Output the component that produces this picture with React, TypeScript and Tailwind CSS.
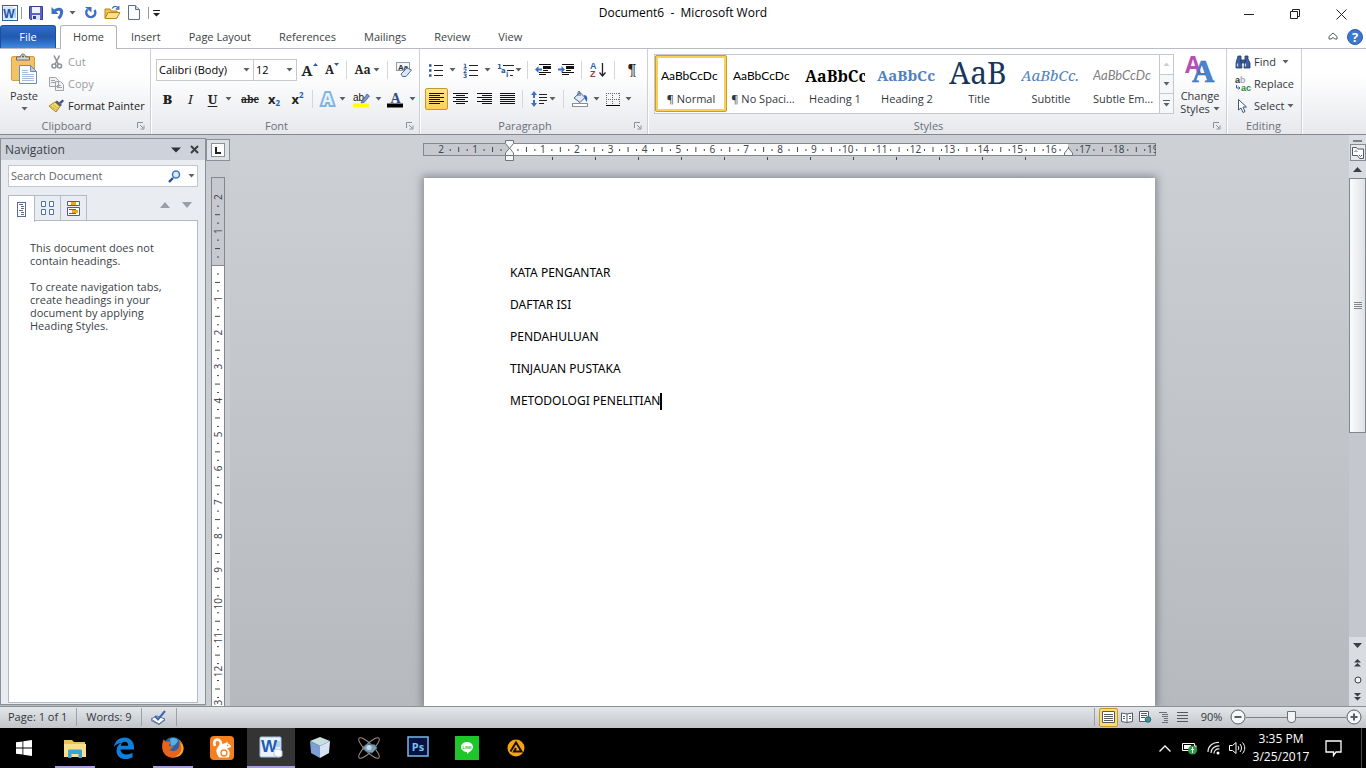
import type { ReactNode } from 'react';
import clsx from 'clsx';

const CM = 33.88;

const tabs = ['Insert', 'Page Layout', 'References', 'Mailings', 'Review', 'View'];

const styles = [
  { name: '¶ Normal', sample: 'AaBbCcDc', look: 'text-[12px] text-black font-[Lato,sans-serif]' },
  { name: '¶ No Spaci...', sample: 'AaBbCcDc', look: 'text-[12px] text-black font-[Lato,sans-serif]' },
  { name: 'Heading 1', sample: 'AaBbCc', look: 'text-[16px] font-bold text-black font-[Noto_Serif,DejaVu_Serif_Condensed,DejaVu_Serif,serif]' },
  { name: 'Heading 2', sample: 'AaBbCc', look: 'text-[15px] font-bold text-[#4f81bd] font-[Noto_Serif,DejaVu_Serif_Condensed,DejaVu_Serif,serif]' },
  { name: 'Title', sample: 'AaB', look: 'text-[30px] text-[#17365d] font-[Noto_Serif,DejaVu_Serif_Condensed,DejaVu_Serif,serif]' },
  { name: 'Subtitle', sample: 'AaBbCc.', look: 'text-[15px] italic text-[#4f81bd] font-[Noto_Serif,DejaVu_Serif_Condensed,DejaVu_Serif,serif]' },
  { name: 'Subtle Em...', sample: 'AaBbCcDc', look: 'text-[13px] italic text-[#808080] font-[Lato,sans-serif]' },
];

const paragraphs = ['KATA PENGANTAR', 'DAFTAR ISI', 'PENDAHULUAN', 'TINJAUAN PUSTAKA', 'METODOLOGI PENELITIAN'];

/* ---------- small pieces ---------- */

function Arrow({ className }: { className?: string }) {
  return (
    <svg width="7" height="4" viewBox="0 0 7 4" className={clsx('shrink-0', className)} aria-hidden="true">
      <path d="M0.5 0h6L3.5 3.5z" fill="#5b6067" />
    </svg>
  );
}

function Sep() {
  return <span className="mx-[3px] h-[18px] w-px shrink-0 bg-[#d3d6da]" />;
}

function Launcher({ label }: { label: string }) {
  return (
    <button aria-label={label} className="flex h-4 w-4 shrink-0 items-center justify-center">
      <svg width="8" height="8" viewBox="0 0 8 8" fill="none" stroke="#8a9099">
        <path d="M0.5 6V0.5H6M3 3l3 3M7 3.500V7H3.500" />
      </svg>
    </button>
  );
}

type GroupProps = { title: string; launcher?: boolean; className?: string; children: ReactNode };

function Group({ title, launcher = true, className, children }: GroupProps) {
  return (
    <section className={clsx('flex shrink-0 flex-col border-r border-[#ccd0d5] shadow-[1px_0_0_#fff]', className)}>
      <div className="flex flex-1">{children}</div>
      <div className="flex h-4 items-center pr-[1px]">
        <span className="flex-1 text-center text-[#6a7079]">{title}</span>
        {launcher && <Launcher label={`${title} options`} />}
      </div>
    </section>
  );
}

function Tool({ label, className, children }: { label: string; className?: string; children: ReactNode }) {
  return (
    <button aria-label={label} className={clsx('flex h-[22px] shrink-0 items-center justify-center', className)}>
      {children}
    </button>
  );
}

function Combo({ label, value, className }: { label: string; value: string; className?: string }) {
  return (
    <div className={clsx('flex h-[22px] items-center border border-[#c5c9ce] bg-white pr-[3px]', className)}>
      <select aria-label={label} className="min-w-0 flex-1 appearance-none bg-transparent pl-[2px] text-black outline-none">
        <option>{value}</option>
      </select>
      <Arrow />
    </div>
  );
}

function Lines({ widths, align = 'left' }: { widths: number[]; align?: 'left' | 'center' | 'right' }) {
  return (
    <svg width="15" height="12" viewBox="0 0 15 12" shapeRendering="crispEdges">
      {widths.map((w, i) => (
        <rect
          key={i}
          x={align === 'left' ? 0 : align === 'right' ? 15 - w : Math.floor((15 - w) / 2)}
          y={i * 2}
          width={w}
          height="1"
          fill="#111"
        />
      ))}
    </svg>
  );
}

/* ---------- title bar ---------- */

function WordLogo() {
  return (
    <svg width="16" height="16" viewBox="0 0 16 16">
      <rect x="0.5" y="0.5" width="15" height="15" fill="#fff" stroke="#2a62ae" />
      <rect x="1.5" y="1.5" width="10" height="13" fill="#d4e4f7" />
      <path d="M12 4h2M12 6h2M12 8h2M12 10h2M12 12h2" stroke="#7fa3d4" />
      <text x="7" y="12.500" textAnchor="middle" fontSize="12" fontWeight="bold" fontFamily="Liberation Sans, sans-serif" fill="#1d56a6">W</text>
    </svg>
  );
}

function TitleBar() {
  return (
    <header className="flex h-[25px] shrink-0 items-center bg-white">
      <div className="flex flex-1 items-center pl-[2px]">
        <WordLogo />
        <span className="ml-[3px] h-3 w-px bg-[#999]" />
        <button aria-label="Save" className="ml-[7px]">
          <svg width="14" height="14" viewBox="0 0 14 14">
            <path d="M0.500 0.500h13v13h-12l-1-1z" fill="#5a63c0" stroke="#363c90" />
            <rect x="3" y="1" width="8" height="6" fill="#eef2fb" />
            <rect x="3" y="9" width="8" height="5" fill="#dfe3ee" />
            <rect x="4" y="10" width="3" height="3" fill="#363c90" />
          </svg>
        </button>
        <button aria-label="Undo" className="ml-[8px]">
          <svg width="14" height="14" viewBox="0 0 14 14" fill="none" stroke="#3f6fc4" strokeWidth="3">
            <path d="M3 5.500C7 1.500 11.500 3 10.500 7.500c-.4 2-1.500 3.500-3 5" />
            <path d="M0.500 1v7h7z" fill="#3f6fc4" stroke="none" />
          </svg>
        </button>
        <Arrow className="ml-[4px]" />
        <button aria-label="Redo" className="ml-[8px]">
          <svg width="14" height="14" viewBox="0 0 14 14" fill="none" stroke="#3f6fc4" strokeWidth="2.500">
            <path d="M3.500 3.500a4.500 4.500 0 1 0 7 0.500" />
            <path d="M1 1h6.500v5.500z" fill="#3f6fc4" stroke="none" />
          </svg>
        </button>
        <button aria-label="Open" className="ml-[6px]">
          <svg width="17" height="15" viewBox="0 0 17 15">
            <path d="M1 13V4h5l1 2h6v7z" fill="#f2c14e" stroke="#b98318" />
            <path d="M1 13.500l3-6h12l-3.500 6z" fill="#ffe08a" stroke="#b98318" />
            <path d="M8 3.500c2-3 5-2.500 6-0.500M14.800 1v3h-3" fill="none" stroke="#3f6fb4" strokeWidth="1.300" />
          </svg>
        </button>
        <button aria-label="New" className="ml-[7px]">
          <svg width="12" height="15" viewBox="0 0 12 15">
            <path d="M0.500 0.500h7l4 4v10h-11z" fill="#fdfeff" stroke="#5d6f8d" />
            <path d="M7.500 0.500v4h4" fill="#c9d6ea" stroke="#5d6f8d" />
          </svg>
        </button>
        <span className="ml-[8px] h-3 w-px bg-[#999]" />
        <button aria-label="Customize Quick Access Toolbar" className="ml-[4px]">
          <svg width="7" height="8" viewBox="0 0 7 8" fill="#222">
            <path d="M0 1h7v1H0zM0 4h7L3.500 7.500z" />
          </svg>
        </button>
      </div>
      <h1 className="text-[12px] text-black">Document6&nbsp; -&nbsp; Microsoft Word</h1>
      <div className="flex flex-1 justify-end pr-[2px] pt-[3px]">
        <button aria-label="Minimize" className="flex h-5 w-[46px] items-center justify-center">
          <svg width="10" height="10" stroke="#222"><path d="M0 5.500h10" /></svg>
        </button>
        <button aria-label="Restore" className="flex h-5 w-[46px] items-center justify-center">
          <svg width="10" height="10" fill="none" stroke="#222"><path d="M0.500 2.500h7v7h-7zM2.500 2.500v-2h7v7h-2" /></svg>
        </button>
        <button aria-label="Close" className="flex h-5 w-[46px] items-center justify-center">
          <svg width="11" height="11" stroke="#222"><path d="M0.500 0.500l10 10M10.500 0.500l-10 10" /></svg>
        </button>
      </div>
    </header>
  );
}

function TabRow() {
  return (
    <nav className="flex h-6 shrink-0 border-b border-[#b9bdc3] bg-white text-[#3b3f45]">
      <button className="w-14 rounded-t-[3px] border border-b-0 border-[#1c4f9f] bg-linear-to-b from-[#2f6cc8] via-[#2259b0] to-[#3f8ae0] text-white">
        File
      </button>
      <button className="relative -mb-px ml-1 w-[57px] rounded-t-[3px] border border-b-0 border-[#b0b4ba] bg-white pb-px">
        Home
      </button>
      {tabs.map((tab) => (
        <button key={tab} className="px-[14px]">{tab}</button>
      ))}
      <div className="flex flex-1 items-center justify-end gap-[9px] pr-[3px]">
        <button aria-label="Minimize the Ribbon">
          <svg width="10" height="9" viewBox="0 0 10 9" fill="none" stroke="#555b63">
            <path d="M1 4.500L5 1l4 3.500v2.500H7L5 5.500 3 7H1z" />
          </svg>
        </button>
        <button aria-label="Help">
          <svg width="16" height="16" viewBox="0 0 16 16">
            <circle cx="8" cy="8" r="7.500" fill="#3b78d0" stroke="#2a5ca8" />
            <text x="8" y="12.500" textAnchor="middle" fontSize="13" fontWeight="bold" fontFamily="Open Sans, sans-serif" fill="#fff">?</text>
          </svg>
        </button>
      </div>
    </nav>
  );
}

/* ---------- ribbon ---------- */

function Clipboard() {
  return (
    <Group title="Clipboard" className="w-[151px]">
      <button className="flex w-12 flex-col items-center pt-[4px]">
        <svg width="28" height="31" viewBox="0 0 28 31">
          <rect x="1.500" y="3.500" width="23" height="24" rx="1.500" fill="#f3c266" stroke="#d49d40" />
          <path d="M6.500 7V4h4c0-4 5-4 5 0h4v3z" fill="#d3d6da" stroke="#666b73" />
          <circle cx="13" cy="3.500" r="1" fill="#555" />
          <path d="M9.500 12.500h11l6 6v12h-17z" fill="#fafcff" stroke="#7188b5" />
          <path d="M20.500 12.500v6h6z" fill="#bccbe6" stroke="#7188b5" />
          <path d="M12 17.500h6M12 19.500h6M12 21.500h12M12 23.500h12M12 25.500h12M12 27.500h12" stroke="#a9bbdc" />
        </svg>
        <span className="mt-1">Paste</span>
        <Arrow className="mt-[3px]" />
      </button>
      <div className="flex flex-col pt-[2px]">
        <button className="flex h-[22px] items-center gap-[3px] text-[#9a9da1]">
          <svg width="17" height="16" viewBox="0 0 17 16" fill="none" stroke="#8f9296" strokeWidth="1.600">
            <path d="M6 1.500l4.500 9M11.500 1.500l-4.500 9" />
            <circle cx="6" cy="12" r="2" />
            <circle cx="11.500" cy="12" r="2" />
          </svg>
          Cut
        </button>
        <button className="flex h-[22px] items-center gap-[3px] text-[#9a9da1]">
          <svg width="17" height="14" viewBox="0 0 17 14" fill="#f1f2f3" stroke="#9fa2a6">
            <path d="M1.500 0.500h6l3 3v6h-9zM7.500 4.500h5l3 3v6h-8z" />
            <path d="M3 3.500h4M3 5.500h4M9 8.500h4M9 10.500h5" />
          </svg>
          Copy
        </button>
        <button className="flex h-[22px] items-center gap-[3px] text-[#222]">
          <svg width="17" height="14" viewBox="0 0 17 14">
            <path d="M1 7l6-4 5 4.500L8 13z" fill="#f3dc6a" stroke="#a38a25" />
            <path d="M3 7.500l6 3.500M5 6l5 3" stroke="#c7ad45" />
            <path d="M7 3l2-1.500 5 4.500-2 1.500z" fill="#555a66" />
            <path d="M11 3.500L14.500 0.500l1.500 1.500-3 3z" fill="#3e4d94" />
          </svg>
          Format Painter
        </button>
      </div>
    </Group>
  );
}

const glyph = 'font-[Noto_Serif,DejaVu_Serif_Condensed,DejaVu_Serif,serif] leading-none text-[#222]';

function FontGroup() {
  return (
    <Group title="Font" className="w-[269px]">
      <div className="flex flex-col gap-[7px] pl-[5px] pt-[10px]">
        <div className="flex items-center">
          <Combo label="Font" value="Calibri (Body)" className="w-[98px]" />
          <Combo label="Font Size" value="12" className="w-[43px] border-l-0" />
          <Tool label="Grow Font" className="ml-[1px] w-[23px]">
            <span className={clsx(glyph, 'text-[15px] font-bold')}>A</span>
            <svg width="5" height="3" className="mt-1 self-start" fill="#3a5a98"><path d="M0 3h5L2.500 0z" /></svg>
          </Tool>
          <Tool label="Shrink Font" className="w-[22px]">
            <span className={clsx(glyph, 'text-[12px] font-bold')}>A</span>
            <svg width="5" height="3" className="mt-1 self-start" fill="#3a5a98"><path d="M0 0h5L2.500 3z" /></svg>
          </Tool>
          <Sep />
          <Tool label="Change Case" className="w-[34px] gap-[2px]">
            <span className={clsx(glyph, 'text-[12px] font-bold')}>Aa</span>
            <Arrow />
          </Tool>
          <Sep />
          <Tool label="Clear Formatting" className="w-[26px]">
            <svg width="18" height="18" viewBox="0 0 18 18">
              <rect x="1.500" y="1.500" width="13" height="8" fill="#f4f7fc" stroke="#8b9bb8" />
              <text x="8" y="9" textAnchor="middle" fontSize="8" fontWeight="bold" fontFamily="Liberation Sans, sans-serif" fill="#333">Aa</text>
              <path d="M6 13l6-6 4.500 2L11 15.500 7.500 15.500z" fill="#dbe7f7" stroke="#4d6fa8" />
            </svg>
          </Tool>
        </div>
        <div className="flex items-center">
          <Tool label="Bold" className="w-[23px]"><b className={clsx(glyph, 'text-[13px] font-black')}>B</b></Tool>
          <Tool label="Italic" className="w-[23px]"><i className={clsx(glyph, 'text-[13px]')}>I</i></Tool>
          <Tool label="Underline" className="w-[36px] gap-[8px]">
            <u className={clsx(glyph, 'text-[13px] font-bold underline-offset-2')}>U</u>
            <Arrow />
          </Tool>
          <Tool label="Strikethrough" className="w-[24px]"><s className={clsx(glyph, 'text-[10px] font-bold')}>abc</s></Tool>
          <Tool label="Subscript" className="w-[24px]">
            <b className="text-[13px] leading-none text-[#222]">x</b>
            <span className="mt-2 text-[8px] leading-none font-bold text-[#2a5db0]">2</span>
          </Tool>
          <Tool label="Superscript" className="w-[23px]">
            <b className="text-[13px] leading-none text-[#222]">x</b>
            <span className="mb-2 text-[8px] leading-none font-bold text-[#2a5db0]">2</span>
          </Tool>
          <Sep />
          <Tool label="Text Effects" className="w-[31px] gap-[2px]">
            <svg width="19" height="22" viewBox="0 0 19 22">
              <text x="9.500" y="17" textAnchor="middle" fontSize="16" fontWeight="bold" fontFamily="Open Sans, sans-serif" fill="#eaf4fd" stroke="#7db4e4" strokeWidth="4" paintOrder="stroke">A</text>
            </svg>
            <Arrow />
          </Tool>
          <Tool label="Text Highlight Color" className="ml-[3px] w-[34px] gap-[5px]">
            <svg width="17" height="17" viewBox="0 0 17 17">
              <text x="0" y="10" fontSize="10" fontFamily="Liberation Sans, sans-serif" fill="#111">ab</text>
              <path d="M9 10l5-7 2.500 2-5.500 6.500-3 .500z" fill="#7e96cf" stroke="#39508d" strokeWidth="0.700" />
              <rect x="0" y="12.500" width="16" height="4" fill="#ffff00" />
            </svg>
            <Arrow />
          </Tool>
          <Tool label="Font Color" className="w-[34px] gap-[5px]">
            <svg width="17" height="17" viewBox="0 0 17 17">
              <text x="8.500" y="11.500" textAnchor="middle" fontSize="14" fontWeight="bold" fontFamily="Liberation Serif, serif" fill="#2d4c86">A</text>
              <rect x="0" y="12.500" width="16" height="4" fill="#000" />
            </svg>
            <Arrow />
          </Tool>
        </div>
      </div>
    </Group>
  );
}

function BulletIcon() {
  return (
    <svg width="15" height="15" viewBox="0 0 15 15">
      <path d="M1 2.500h2.500M1 7.500h2.500M1 12.500h2.500" stroke="#2c56a0" strokeWidth="2.500" />
      <path d="M6 2.500h9M6 7.500h9M6 12.500h9" stroke="#222" />
    </svg>
  );
}

function NumberIcon() {
  return (
    <svg width="15" height="15" viewBox="0 0 15 15">
      <g fontSize="6" fontWeight="bold" fontFamily="DejaVu Sans, sans-serif" fill="#2c56a0">
        <text x="0" y="5">1</text>
        <text x="0" y="10">2</text>
        <text x="0" y="15">3</text>
      </g>
      <path d="M6 2.500h9M6 7.500h9M6 12.500h9" stroke="#222" />
    </svg>
  );
}

function IndentIcon({ flip }: { flip?: boolean }) {
  return (
    <svg width="17" height="12" viewBox="0 0 17 12">
      <path d="M4 0.500h12M8 2.500h8M8 4.500h8M8 6.500h5M4 8.500h12M4 10.500h7" stroke="#111" />
      <path d="M8 3.500h8" stroke="#111" />
      <path d={flip ? 'M7 5.500L3.500 2v2.500H0v2h3.500V9z' : 'M0 5.500L3.500 2v2.500H7v2H3.500V9z'} fill="#3d6fc4" />
    </svg>
  );
}

function ParagraphGroup() {
  return (
    <Group title="Paragraph" className="w-[228px]">
      <div className="flex flex-col gap-[7px] pl-[5px] pt-[10px]">
        <div className="flex items-center">
          <Tool label="Bullets" className="w-[34px] gap-[6px]"><BulletIcon /><Arrow /></Tool>
          <Tool label="Numbering" className="w-[35px] gap-[6px]"><NumberIcon /><Arrow /></Tool>
          <Tool label="Multilevel List" className="w-[30px]">
            <svg width="18" height="15" viewBox="0 0 18 15">
              <g fontSize="7" fontWeight="bold" fontFamily="DejaVu Sans, sans-serif" fill="#2c56a0">
                <text x="0" y="6">1</text>
                <text x="4" y="10">a</text>
                <text x="9" y="14">i</text>
              </g>
              <path d="M6 2.500h11M10 7.500h7M13 12.500h3" stroke="#222" />
            </svg>
            <Arrow />
          </Tool>
          <Sep />
          <Tool label="Decrease Indent" className="ml-px w-[23px]"><IndentIcon /></Tool>
          <Tool label="Increase Indent" className="w-[23px]"><IndentIcon flip /></Tool>
          <Sep />
          <Tool label="Sort" className="w-[26px]">
            <svg width="16" height="18" viewBox="0 0 16 18">
              <g fontSize="9" fontWeight="bold" fontFamily="Liberation Sans, sans-serif">
                <text x="0" y="8" fill="#2f63ad">A</text>
                <text x="0" y="16" fill="#a33c34">Z</text>
              </g>
              <path d="M12.500 2v12M9.500 11.500l3 3.500 3-3.500" stroke="#222" strokeWidth="1.300" fill="none" />
            </svg>
          </Tool>
          <Sep />
          <Tool label="Show/Hide" className="ml-[2px] w-[24px]"><span className={clsx(glyph, 'text-[14px]')}>¶</span></Tool>
        </div>
        <div className="flex items-center">
          <Tool label="Align Text Left" className="w-[23px] rounded-[2px] border border-[#c29b29] bg-linear-to-b from-[#fde48b] to-[#fbd155]">
            <Lines widths={[15, 11, 15, 11, 15, 11]} />
          </Tool>
          <Tool label="Center" className="w-[24px]"><Lines widths={[15, 9, 15, 9, 15, 9]} align="center" /></Tool>
          <Tool label="Align Text Right" className="w-[24px]"><Lines widths={[15, 10, 15, 10, 15, 10]} align="right" /></Tool>
          <Tool label="Justify" className="w-[23px]"><Lines widths={[15, 15, 15, 15, 15, 15]} /></Tool>
          <Sep />
          <Tool label="Line Spacing" className="w-[34px] gap-[1px]">
            <svg width="17" height="16" viewBox="0 0 17 16">
              <path d="M3 0L0 4h2v3h2V4h2zM3 16l-3-4h2V9h2v3h2z" fill="#3d6fc4" />
              <path d="M8 3.500h8M8 6.500h8M8 9.500h8M8 12.500h5" stroke="#222" />
            </svg>
            <Arrow />
          </Tool>
          <Sep />
          <Tool label="Shading" className="ml-[2px] w-[33px] gap-[5px]">
            <svg width="16" height="16" viewBox="0 0 16 16">
              <path d="M2 7l6-5.500 5 5L8 11.500z" fill="#dfe9f7" stroke="#46608f" />
              <path d="M6 5V1.500c0-1.500 2-1.500 2 0V5" fill="none" stroke="#46608f" />
              <path d="M12 4c3 0 4 3 2.500 7l-2-4z" fill="#2f5fb4" />
              <rect x="0.500" y="12.500" width="15" height="3" fill="#fff" stroke="#8a8f96" />
            </svg>
            <Arrow />
          </Tool>
          <Tool label="Borders" className="w-[33px] gap-[5px]">
            <svg width="14" height="15" viewBox="0 0 14 15" fill="none" stroke="#666" strokeDasharray="1 1">
              <path d="M0.500 1v12M6.500 1v12M13.500 1v12M0 1.500h14M0 7.500h14" />
              <path d="M0 13.500h14" stroke="#000" strokeDasharray="none" />
            </svg>
            <Arrow />
          </Tool>
        </div>
      </div>
    </Group>
  );
}

function StylesGroup() {
  return (
    <Group title="Styles" className="w-[579px]">
      <div className="ml-[6px] mt-[5px] flex h-[60px] border border-[#c5c9ce] bg-white">
        {styles.map((style, i) => (
          <button
            key={style.name}
            className={clsx(
              'flex h-[57px] w-[72px] flex-col items-center rounded-[2px] border-[3px] px-[2px]',
              i === 0 ? 'border-[#f5d256] outline -outline-offset-1 outline-[#c99f2c]' : 'border-transparent'
            )}
          >
            <span className={clsx('flex h-[30px] w-[60px] items-center overflow-hidden whitespace-nowrap leading-none', style.name !== 'Title' && 'pt-[5px]', style.look)}>
              {style.sample}
            </span>
            <span className="mt-[3px] whitespace-nowrap leading-4">{style.name}</span>
          </button>
        ))}
        <div className="flex w-[14px] flex-col border-l border-[#c5c9ce]">
          <button aria-label="Previous styles" className="flex flex-1 items-center justify-center">
            <Arrow className="rotate-180 opacity-30" />
          </button>
          <button aria-label="Next styles" className="flex flex-1 items-center justify-center border-y border-[#c5c9ce] bg-[#f6f7f8]">
            <Arrow />
          </button>
          <button aria-label="More styles" className="flex flex-1 flex-col items-center justify-center gap-[2px] bg-[#f6f7f8]">
            <span className="h-px w-[7px] bg-[#5b6067]" />
            <Arrow />
          </button>
        </div>
      </div>
      <button className="flex flex-1 flex-col items-center pt-[6px] leading-[13px]">
        <svg width="30" height="30" viewBox="0 0 30 30" fontWeight="bold">
          <text x="0" y="18" fontSize="23" fontFamily="Open Sans, sans-serif" fill="#b74fb8">A</text>
          <text x="7" y="27" fontSize="31" fontFamily="Liberation Serif, serif" fill="#4a86d0" stroke="#2f66b0" strokeWidth="0.500">A</text>
        </svg>
        <span className="mt-1">Change</span>
        <span className="flex items-center gap-[3px]">Styles <Arrow /></span>
      </button>
    </Group>
  );
}

function EditingGroup() {
  return (
    <Group title="Editing" launcher={false} className="w-[75px]">
      <div className="flex flex-col pl-[8px] pt-[2px]">
        <button className="flex h-[22px] items-center gap-[3px]">
          <svg width="16" height="14" viewBox="0 0 16 14" fill="#3d5f9e" stroke="#1e3767" strokeWidth="0.800">
            <path d="M3 1h3v3l1 9H1V8zM10 1h3l0 3 2 4v5H9l1-9z" />
            <path d="M6 5h4v3H6z" />
            <path d="M2.500 8.500v3M10.500 8.500v3" stroke="#c4d5f0" strokeWidth="1.200" />
          </svg>
          Find <Arrow className="ml-[3px]" />
        </button>
        <button className="flex h-[22px] items-center gap-[3px]">
          <svg width="16" height="18" viewBox="0 0 16 18" fontSize="9" fontWeight="bold" fontFamily="Liberation Sans, sans-serif">
            <text x="0" y="8" fill="#333">a</text>
            <text x="5" y="8" fill="#aaa">b</text>
            <text x="6" y="16" fill="#2b8a35">ac</text>
            <path d="M1.500 10v3h3M3.500 11.500L5 13l-1.500 1.500" fill="none" stroke="#2f5fae" />
          </svg>
          Replace
        </button>
        <button className="flex h-[22px] items-center gap-[3px]">
          <svg width="16" height="14" viewBox="0 0 16 14">
            <path d="M3.500 0.500v10.500l2.500-2 2 4.500 2-1-2-4.500h3.500z" fill="#fff" stroke="#3c557f" />
          </svg>
          Select <Arrow />
        </button>
      </div>
    </Group>
  );
}

function Ribbon() {
  return (
    <div className="flex h-[86px] shrink-0 overflow-hidden border-b border-[#85898f] bg-linear-to-b from-white from-30% to-[#e6e8ec] text-[#33373d]">
      <Clipboard />
      <FontGroup />
      <ParagraphGroup />
      <StylesGroup />
      <EditingGroup />
    </div>
  );
}

/* ---------- work area ---------- */

function NavigationPane() {
  return (
    <aside className="mb-px mt-[3px] flex w-[206px] shrink-0 flex-col border border-[#8b9098] bg-[#e9ecf1] text-[#3b3f48]">
      <div className="flex h-[21px] items-center bg-[#cdd2db] pl-1 pr-[6px]">
        <h2 className="flex-1 text-[12px]">Navigation</h2>
        <button aria-label="Task Pane Options" className="mr-[9px]">
          <svg width="10" height="6" fill="#2e3138"><path d="M0 0.500h10L5 5.500z" /></svg>
        </button>
        <button aria-label="Close">
          <svg width="9" height="9" stroke="#3a3d44" strokeWidth="2"><path d="M1 1l7 7M8 1L1 8" /></svg>
        </button>
      </div>
      <div className="mx-[7px] mt-[5px] flex h-[22px] items-center border border-[#c3c8d0] bg-white pr-[2px]">
        <input aria-label="Search Document" placeholder="Search Document" className="min-w-0 flex-1 bg-transparent pl-[2px] outline-none placeholder:text-[#5f636b]" />
        <button aria-label="Search">
          <svg width="13" height="13" viewBox="0 0 13 13" fill="none">
            <path d="M1 12l4-4" stroke="#2c4f8e" strokeWidth="2.400" />
            <circle cx="8" cy="4.500" r="3.500" fill="#dcecfb" stroke="#3f78c4" strokeWidth="1.600" />
          </svg>
        </button>
        <button aria-label="Search options" className="ml-[7px]"><Arrow /></button>
      </div>
      <div className="mx-[7px] mt-[8px] flex h-[26px] shrink-0">
        <button aria-label="Browse headings" className="relative z-10 -mb-px flex w-[27px] items-center justify-center border border-b-0 border-[#b4bac4] bg-white">
          <svg width="9" height="15" viewBox="0 0 9 15" fill="#fff" stroke="#5d6c8c">
            <rect x="0.500" y="0.500" width="8" height="14" />
            <path d="M2 2.500h4M4 4.500h3M4 6.500h3M2 8.500h4M4 10.500h3M4 12.500h3" />
          </svg>
        </button>
        <button aria-label="Browse pages" className="flex w-[26px] items-center justify-center border border-l-0 border-[#b4bac4]">
          <svg width="13" height="14" viewBox="0 0 13 14" fill="#fff" stroke="#4c6faf">
            <path d="M0.500 0.500h4v5h-4zM8.500 0.500h4v5h-4zM0.500 8.500h4v5h-4zM8.500 8.500h4v5h-4z" />
          </svg>
        </button>
        <button aria-label="Browse search results" className="flex w-[26px] items-center justify-center border border-l-0 border-[#b4bac4]">
          <svg width="13" height="15" viewBox="0 0 13 15" fill="#fff" stroke="#4b5f86">
            <path d="M0.500 0.500h12v4h-12zM0.500 6.500h12v8h-12z" />
            <path d="M4 2.500h5M5 10.500h6" stroke="#e7a821" strokeWidth="3" />
            <path d="M2 8.500h7M2 12.500h7" />
          </svg>
        </button>
        <div className="flex flex-1 items-start justify-end gap-[12px] border-b border-[#b4bac4] pr-[6px] pt-[7px]">
          <button aria-label="Previous heading"><svg width="10" height="6" fill="#9a9ea5"><path d="M0 6h10L5 0z" /></svg></button>
          <button aria-label="Next heading"><svg width="10" height="6" fill="#9a9ea5"><path d="M0 0h10L5 6z" /></svg></button>
        </div>
      </div>
      <div className="mx-[7px] mb-px flex-1 border border-t-0 border-[#b4bac4] bg-white px-[21px] pt-5 leading-[13px]">
        <p className="w-[144px]">This document does not contain headings.</p>
        <p className="mt-[13px] w-[144px]">To create navigation tabs, create headings in your document by applying Heading Styles.</p>
      </div>
    </aside>
  );
}

const marks = Array.from({ length: 20 }, (_, i) => i);

function VerticalRuler() {
  const zero = 88;
  return (
    <svg className="mt-4 w-[14px] flex-1" fontSize="10" fontFamily="Noto Sans, sans-serif" fill="#44484f" textAnchor="middle">
      <rect x="0.500" y="0.500" width="13" height="1200" fill="#fff" stroke="#84888e" />
      <rect x="0.500" y="0.500" width="13" height={zero} fill="#c6cacf" stroke="#84888e" />
      {marks.slice(0, 16).map((i) => {
        const y = zero + (i - 2) * CM;
        const label = Math.abs(i - 2);
        return (
          <g key={i}>
            {label > 0 && <text transform={`translate(10.500 ${y}) rotate(-90)`}>{label}</text>}
            <rect x="6" y={y + CM * 0.25} width="2" height="1" />
            <rect x="4" y={y + CM * 0.5} width="5" height="1" />
            <rect x="6" y={y + CM * 0.75} width="2" height="1" />
          </g>
        );
      })}
    </svg>
  );
}

function HorizontalRuler() {
  const zero = 86;
  return (
    <svg width="733" height="22" className="shrink-0 overflow-hidden" fontSize="10" fontFamily="Noto Sans, sans-serif" fill="#44484f" textAnchor="middle">
      <rect x="0.500" y="4.500" width="732" height="12" fill="#c6cacf" stroke="#84888e" />
      <rect x={zero} y="5" width="559" height="11" fill="#fff" />
      {[...marks, 20, 21].map((i) => {
        const n = i - 2;
        const x = zero + n * CM;
        return (
          <g key={i}>
            {n !== 0 && n < 20 && <text x={x} y="14">{Math.abs(n)}</text>}
            {n < 19 && (
              <>
                <rect x={x + CM * 0.25} y="10" width="1" height="2" />
                <rect x={x + CM * 0.5} y="8" width="1" height="5" />
                <rect x={x + CM * 0.75} y="10" width="1" height="2" />
              </>
            )}
          </g>
        );
      })}
      {marks.slice(1, 13).map((i) => (
        <rect key={i} x={zero + i * 43} y="18" width="1" height="3" />
      ))}
      <g fill="#f4f5f6" stroke="#73777d">
        <path d="M82.500 1.500h8v3l-4 5-4-5z" />
        <path d="M82.500 16.500v-2.500l4-5 4 5v2.500z" />
        <path d="M82.500 16.500h8v5h-8z" />
        <path d="M641.500 16.500v-2.500l4-5 4 5v2.500z" />
      </g>
    </svg>
  );
}

function Document() {
  return (
    <main className="flex min-w-0 flex-1 flex-col items-center overflow-hidden pt-[4px]">
      <HorizontalRuler />
      <article className="mt-[17px] w-[731px] flex-1 shrink-0 bg-white pl-[86px] pt-[79px] shadow-[0_0_8px_2px_rgba(70,74,80,0.5)]">
        {paragraphs.map((text, i) => (
          <p key={text} className="flex h-8 items-center font-['Noto_Sans',sans-serif] text-[12px] text-black">
            {text}
            {i === paragraphs.length - 1 && <span className="h-[17px] w-[2px] bg-black" />}
          </p>
        ))}
      </article>
    </main>
  );
}

function VerticalScrollbar() {
  return (
    <div className="flex w-[17px] shrink-0 flex-col items-center bg-[#d9dce1]">
      <span className="mt-[5px] h-[2px] w-[9px] bg-[#7d8188]" />
      <button aria-label="View Ruler" className="mt-[2px] flex h-[17px] w-4 items-center justify-center border border-[#868a91] bg-[#e7e9ec]">
        <svg width="12" height="12" viewBox="0 0 12 12" fill="#fff" stroke="#555a62">
          <path d="M0.500 0.500h4l1 1.500h6v9.500h-4l-2-3h-5z" />
          <path d="M2.500 5l1.500-1.500L5.500 5M7 8l1.500 1.500L10 8" />
        </svg>
      </button>
      <button aria-label="Scroll up" className="flex h-[17px] items-center">
        <svg width="9" height="5" fill="#3b3e44"><path d="M0 5h9L4.500 0z" /></svg>
      </button>
      <div className="flex w-full flex-1 flex-col bg-[#c4c8ce]">
        <div className="flex h-[255px] flex-col items-center justify-center gap-[1px] border border-[#82878e] bg-linear-to-r from-[#fbfbfc] to-[#dfe2e6]">
          <span className="h-px w-2 bg-[#82878e]" />
          <span className="h-px w-2 bg-[#82878e]" />
          <span className="h-px w-2 bg-[#82878e]" />
          <span className="h-px w-2 bg-[#82878e]" />
        </div>
      </div>
      <button aria-label="Scroll down" className="flex h-[17px] items-center">
        <svg width="9" height="5" fill="#3b3e44"><path d="M0 0h9L4.500 5z" /></svg>
      </button>
      <button aria-label="Previous page" className="flex h-[17px] items-center">
        <svg width="7" height="8" fill="#3b3e44"><path d="M0 3.500h7L3.500 0zM0 7.500h7L3.500 4z" /></svg>
      </button>
      <button aria-label="Select Browse Object" className="flex h-[17px] items-center">
        <svg width="8" height="8" fill="#f3f4f5" stroke="#3b3e44"><circle cx="4" cy="4" r="3" /></svg>
      </button>
      <button aria-label="Next page" className="flex h-[18px] items-center">
        <svg width="7" height="8" fill="#3b3e44"><path d="M0 0h7L3.500 3.500zM0 4h7L3.500 7.500z" /></svg>
      </button>
    </div>
  );
}

/* ---------- status bar ---------- */

function StatusBar() {
  return (
    <footer className="flex h-[22px] shrink-0 items-center border-t border-[#8b9097] bg-linear-to-b from-[#e4e7ea] to-[#c1c5c9] pb-px text-[#33373d]">
      <span className="px-2">Page: 1 of 1</span>
      <span className="ml-px h-[18px] w-px bg-[#9da1a7]" />
      <span className="px-[9px]">Words: 9</span>
      <span className="h-[18px] w-px bg-[#9da1a7]" />
      <button aria-label="Proofing" className="flex w-[34px] justify-center">
        <svg width="17" height="15" viewBox="0 0 17 15">
          <path d="M1 9l6-3 8 3-6 5z" fill="#fff" stroke="#5872a8" />
          <path d="M1 10.500l8 4 6-4.500" fill="none" stroke="#5872a8" />
          <path d="M5 6l3 3.500L15 1" fill="none" stroke="#4166b0" strokeWidth="2" />
        </svg>
      </button>
      <span className="h-[18px] w-px bg-[#9da1a7]" />
      <div className="flex flex-1 items-center justify-end">
        <span className="mr-1 h-[18px] w-px bg-[#9da1a7]" />
        <button aria-label="Print Layout" className="flex h-[19px] w-[19px] items-center justify-center rounded-[2px] border border-[#c29b29] bg-[#fbdc73]">
          <svg width="13" height="12" fill="#fff" stroke="#555a62"><path d="M0.500 0.500h12v11h-12zM2 3.500h9M2 5.500h9M2 7.500h9M2 9.500h9" /></svg>
        </button>
        <button aria-label="Full Screen Reading" className="flex w-[18px] justify-center">
          <svg width="12" height="11" fill="#fff" stroke="#555a62"><path d="M0.500 1l5.500 1 5.500-1v8.500L6 10.500l-5.500-1zM6 2v8M2 4.500h2M2 6.500h2M8 4.500h2M8 6.500h2" /></svg>
        </button>
        <button aria-label="Web Layout" className="flex w-[19px] justify-center">
          <svg width="13" height="12" fill="#fff" stroke="#555a62">
            <path d="M0.500 0.500h9v10h-9zM2 2.500h6M2 4.500h6M2 6.500h4" />
            <circle cx="9" cy="8.500" r="2.800" fill="#3f8f93" stroke="#2b5f8d" />
          </svg>
        </button>
        <button aria-label="Outline" className="flex w-[18px] justify-center">
          <svg width="11" height="11" stroke="#6b7078"><path d="M0 0.500h8M3 2.500h6M3 4.500h6M5 6.500h4M5 8.500h4M3 10.500h6" /></svg>
        </button>
        <button aria-label="Draft" className="flex w-[18px] justify-center">
          <svg width="11" height="10" stroke="#55595f"><path d="M0 0.500h11M0 3.500h11M0 6.500h11M0 9.500h11" /></svg>
        </button>
        <button className="w-[39px] pl-[2px]">90%</button>
        <button aria-label="Zoom Out">
          <svg width="16" height="16" fill="#f6f7f8" stroke="#595e66"><circle cx="8" cy="8" r="7" /><path d="M4.500 8h7" strokeWidth="2" /></svg>
        </button>
        <input
          type="range"
          aria-label="Zoom"
          defaultValue={45}
          className="h-4 w-[100px] appearance-none bg-transparent [&::-webkit-slider-runnable-track]:h-px [&::-webkit-slider-runnable-track]:bg-[#7b8087] [&::-webkit-slider-thumb]:-mt-[6px] [&::-webkit-slider-thumb]:h-3 [&::-webkit-slider-thumb]:w-[9px] [&::-webkit-slider-thumb]:appearance-none [&::-webkit-slider-thumb]:rounded-b-[4px] [&::-webkit-slider-thumb]:border [&::-webkit-slider-thumb]:border-[#6b7078] [&::-webkit-slider-thumb]:bg-[#f3f4f5]"
        />
        <button aria-label="Zoom In" className="mr-[4px]">
          <svg width="16" height="16" fill="#f6f7f8" stroke="#595e66"><circle cx="8" cy="8" r="7" /><path d="M4.500 8h7M8 4.500v7" strokeWidth="2" /></svg>
        </button>
      </div>
    </footer>
  );
}

/* ---------- taskbar ---------- */

const apps = [
  {
    name: 'File Explorer',
    open: true,
    icon: (
      <svg width="24" height="24" viewBox="0 0 24 24">
        <path d="M1 4h8l2 2h11v15H1z" fill="#e9c35c" />
        <path d="M1 8h22v13H1z" fill="#fbe08c" />
        <path d="M5 22v-7c0-1 .5-1.500 1.500-1.500h11c1 0 1.500.5 1.500 1.500v7h-3.500v-4h-7v4z" fill="#38a4d8" />
      </svg>
    ),
  },
  {
    name: 'Microsoft Edge',
    icon: (
      <svg width="24" height="24" viewBox="0 0 24 24">
        <path d="M2 11C3 5 7 1.500 12.500 1.500c6 0 9.500 4.500 9.500 9.500v2.500H8.500c.2 3.500 3 5 6 5 2.200 0 4.300-.6 6-1.700v4.400C18.600 22.400 16.300 23 13.500 23 8 23 4.500 19.500 4.500 14.700c0-3.500 1.800-6.200 4.800-7.700C6.500 7 4 8.500 2 11zm6.800-1.300h7.400c0-2.500-1.200-3.900-3.500-3.900-2 0-3.500 1.500-3.900 3.900z" fill="#0f7fdc" />
      </svg>
    ),
  },
  {
    name: 'Firefox',
    open: true,
    icon: (
      <svg width="24" height="24" viewBox="0 0 24 24">
        <circle cx="12" cy="10.500" r="9.500" fill="#2a64a8" />
        <path d="M9 3c3-2 7-1 8 2l-3 4-4 1z" fill="#54b2e2" />
        <path d="M2.500 3.500c1 .5 2 1.500 2.500 2.500 2-1 3.500-.5 5 .5-1 1-2 1.500-2 3 1.500 1.500 3 .5 4.500 1-1.500 2.500-3.500 2.500-4 3.500 5 3 10-.5 10-6 0-2-.5-3.500-1-4.500C21 5.500 22.500 8.500 22.500 12.500a10.700 10.500 0 0 1-21.300 0c-.3-3.500.3-6.500 1.300-9z" fill="#e8641b" />
        <path d="M19 7c3 6 1 12-6 13.500 6 1 9.500-3 9.500-8 0-2.500-1-5-3.500-5.500z" fill="#f9a826" />
      </svg>
    ),
  },
  {
    name: 'UC Browser',
    icon: (
      <svg width="24" height="24" viewBox="0 0 24 24" fill="none">
        <rect width="24" height="24" rx="4" fill="#f7801e" />
        <path d="M5 10C2.500 5 7 1.500 10 5c2 2.500 1 4.500-1 6.500-2 2.500-1.500 5.500.5 8" stroke="#fff" strokeWidth="2.600" />
        <path d="M10 11c1.500-3 4-4 6-4l1-1.500.8 2c2 .6 3 1.800 3.200 3.500l-4 1.500c3 2 3.500 5.500 1.500 9H9c-2-3-1.500-7.500 1-10.500z" fill="#fff" />
        <circle cx="14" cy="17" r="3" stroke="#f7801e" strokeWidth="1.300" />
        <circle cx="17.500" cy="9.500" r="0.700" fill="#f7801e" />
      </svg>
    ),
  },
  {
    name: 'Document6 - Microsoft Word',
    open: true,
    active: true,
    icon: (
      <svg width="24" height="24" viewBox="0 0 24 24">
        <rect x="1" y="1" width="21" height="20" rx="1" fill="#e8f1fc" stroke="#a5c2e6" />
        <path d="M17 6h4M17 8h4M17 10h4" stroke="#8eabd4" />
        <text x="10" y="16" textAnchor="middle" fontSize="17" fontWeight="bold" fontFamily="Liberation Sans, sans-serif" fill="#1b5cb8">W</text>
        <path d="M15 14l4-1 4 2v5l-4 1-4-2z" fill="#fff" stroke="#b6cae6" />
      </svg>
    ),
  },
  {
    name: 'VirtualBox',
    icon: (
      <svg width="24" height="24" viewBox="0 0 24 24">
        <path d="M12 1l10 4-10 5L2 5z" fill="#c7dfdc" />
        <path d="M2 5l10 5v12L3 17z" fill="#7f9fd2" />
        <path d="M22 5l-10 5v12l9-5z" fill="#d7e3f5" />
      </svg>
    ),
  },
  {
    name: 'Atom',
    icon: (
      <svg width="24" height="24" viewBox="0 0 24 24" fill="none" stroke="#a08f82">
        <ellipse cx="12" cy="12" rx="14" ry="4" transform="rotate(45 12 12)" />
        <ellipse cx="12" cy="12" rx="14" ry="4" transform="rotate(-45 12 12)" />
        <path d="M5 12l5-4 8 1 2 3-5 5-5-1z" fill="#7c9fb6" stroke="#4e6d84" />
        <circle cx="12" cy="11.500" r="2.500" fill="#c4dce8" stroke="none" />
      </svg>
    ),
  },
  {
    name: 'Photoshop',
    icon: (
      <svg width="24" height="24" viewBox="0 0 24 24">
        <rect x="2" y="1" width="20" height="19" fill="#06123f" stroke="#7cb8ea" strokeWidth="1.500" />
        <text x="12" y="15" textAnchor="middle" fontSize="11" fontWeight="bold" fontFamily="Open Sans, sans-serif" fill="#7cc0f5">Ps</text>
      </svg>
    ),
  },
  {
    name: 'LINE',
    icon: (
      <svg width="24" height="24" viewBox="0 0 24 24">
        <rect width="24" height="24" fill="#1ec729" />
        <path d="M12 6c3.500 0 6 2.200 6 5s-3 4.800-6 7c0-1 .2-1.700-.5-2C8.500 15.500 6 13.800 6 11s2.500-5 6-5z" fill="#fff" />
        <text x="12" y="12.500" textAnchor="middle" fontSize="4" fontWeight="bold" fontFamily="Liberation Sans, sans-serif" fill="#1ec729">LINE</text>
      </svg>
    ),
  },
  {
    name: 'AIMP',
    icon: (
      <svg width="24" height="24" viewBox="0 0 24 24">
        <circle cx="12" cy="12" r="8.500" fill="#f5a414" />
        <path d="M6.500 15.500L12 6.500l5.500 9H10L12 12" fill="none" stroke="#1a1206" strokeWidth="2" />
      </svg>
    ),
  },
];

function Taskbar() {
  return (
    <footer className="flex h-10 shrink-0 items-center bg-black text-white">
      <button aria-label="Start" className="flex h-full w-[51px] items-center justify-center pr-[3px]">
        <svg width="16" height="16" viewBox="0 0 16 16" fill="#fff">
          <path d="M0 2.300l6.500-.9v6.200H0zM7.300 1.300L16 0v7.600H7.300zM0 8.400h6.500v6.200L0 13.700zM7.300 8.400H16V16l-8.700-1.300z" />
        </svg>
      </button>
      <div className="flex h-full gap-px">
        {apps.map((app) => (
          <button
            key={app.name}
            aria-label={app.name}
            className={clsx('flex h-full w-12 flex-col items-center', app.active && 'bg-[#343434]')}
          >
            <span className="flex flex-1 items-center pt-px">{app.icon}</span>
            <span className={clsx('h-[2px]', app.active ? 'w-full' : 'w-10', app.open && 'bg-[#a99be0]')} />
          </button>
        ))}
      </div>
      <div className="flex h-full flex-1 items-center justify-end">
        <button aria-label="Show hidden icons" className="mr-[11px]">
          <svg width="12" height="7" fill="none" stroke="#fff" strokeWidth="1.300"><path d="M0.500 6.500L6 1l5.500 5.500" /></svg>
        </button>
        <button aria-label="Battery" className="mr-[9px]">
          <svg width="16" height="14" viewBox="0 0 16 14">
            <path d="M0.500 2.500h12v7h-12z" fill="none" stroke="#fff" />
            <path d="M2 4h7v4H2zM13 4.500h1.500v3H13z" fill="#fff" />
            <circle cx="10.500" cy="9" r="4.500" fill="#2c9e48" />
            <path d="M10.500 6v6M9 8l1.500 1.500L12 8" stroke="#fff" fill="none" />
          </svg>
        </button>
        <button aria-label="Network" className="mr-[8px]">
          <svg width="14" height="14" viewBox="0 0 14 14" fill="none" stroke="#e8e8e8" strokeWidth="1.200">
            <path d="M1 11C1 5 6 1 12 1.500M4 12c0-4 3.500-7.500 8.500-7M7 12.500c0-2.500 2-5 5.500-4.500" />
            <circle cx="11" cy="12" r="1.500" fill="#fff" stroke="none" />
          </svg>
        </button>
        <button aria-label="Volume" className="mr-[4px]">
          <svg width="18" height="14" viewBox="0 0 18 14" fill="none" stroke="#fff">
            <path d="M0.500 4.500h3l3.500-3v11l-3.500-3h-3zM9 5c1 1 1 3 0 4M11 3c2 2.500 2 5.500 0 8M13.500 1.500c3 3.500 3 7.500 0 11" />
          </svg>
        </button>
        <button className="flex h-full w-[60px] flex-col items-center justify-center whitespace-nowrap text-[12px] leading-[18px]">
          <span>3:35 PM</span>
          <span>3/25/2017</span>
        </button>
        <button aria-label="Action Center" className="ml-[14px] mr-[19px]">
          <svg width="17" height="17" fill="none" stroke="#fff" strokeWidth="1.300"><path d="M1 1h15v11h-5l-2.500 3.500V12H1z" /></svg>
        </button>
        <span className="mr-1 h-full w-px bg-[#4a4a4a]" />
      </div>
    </footer>
  );
}

export default function App() {
  return (
    <div className="flex h-screen w-full flex-col overflow-hidden bg-white font-['Open_Sans','Noto_Sans',sans-serif] text-[11px] leading-4">
      <TitleBar />
      <TabRow />
      <Ribbon />
      <div className="flex min-h-0 flex-1 bg-linear-to-b from-[#cdd0d5] to-[#b6b9be]">
        <NavigationPane />
        <div className="flex w-6 shrink-0 flex-col items-center overflow-hidden bg-[#c9ccd1] pt-[4px]">
          <button aria-label="Tab selector" className="flex h-[22px] w-6 shrink-0 items-center justify-center border border-[#8b9097] bg-[#dcdfe3]">
            <svg width="14" height="14" fill="#fff" stroke="#8b9097">
              <rect x="0.500" y="0.500" width="13" height="13" />
              <path d="M5 4v6h5" fill="none" stroke="#222" strokeWidth="2" />
            </svg>
          </button>
          <VerticalRuler />
        </div>
        <Document />
        <VerticalScrollbar />
      </div>
      <StatusBar />
      <Taskbar />
    </div>
  );
}
